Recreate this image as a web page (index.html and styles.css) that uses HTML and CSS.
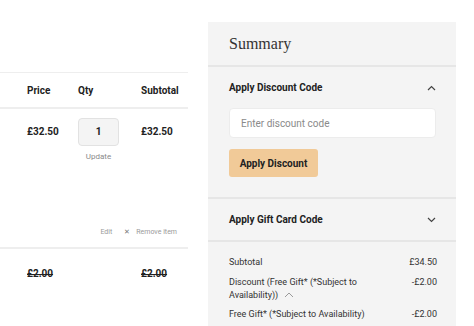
FILE: index.html
```html
<!DOCTYPE html>
<html>
  <head>
    <meta charset="UTF-8">
    <meta name="viewport" content="width=device-width, initial-scale=1.0">
    <title>Basket</title>
    <link rel="stylesheet" href="styles.css">
  </head>
  <body>
    <div class="page">
      <main class="cart">
        <div class="cart-head">
          <span>Price</span>
          <span>Qty</span>
          <span>Subtotal</span>
        </div>
        <div class="cart-item">
          <div class="cart-cols">
            <span class="money">£32.50</span>
            <div class="qty">
              <div class="qty-box">1</div>
              <span class="qty-update">Update</span>
            </div>
            <span class="money">£32.50</span>
          </div>
          <div class="item-actions">
            <a>Edit</a>
            <a><span class="remove-x">✕</span>Remove item</a>
          </div>
        </div>
        <div class="cart-item gift-item">
          <div class="cart-cols">
            <span class="money struck">£2.00</span>
            <span></span>
            <span class="money struck">£2.00</span>
          </div>
        </div>
      </main>

      <aside class="summary">
        <div class="summary-title">Summary</div>

        <div class="section">
          <div class="section-head">
            <span>Apply Discount Code</span>
            <svg class="chev" width="9" height="6" viewBox="0 0 9 6"><polyline points="1,5 4.5,1.5 8,5" fill="none" stroke="#444" stroke-width="1.2"/></svg>
          </div>
          <input class="code-input" type="text" placeholder="Enter discount code">
          <button class="apply-btn">Apply Discount</button>
        </div>

        <div class="section">
          <div class="section-head">
            <span>Apply Gift Card Code</span>
            <svg class="chev" width="9" height="6" viewBox="0 0 9 6"><polyline points="1,1 4.5,4.5 8,1" fill="none" stroke="#444" stroke-width="1.2"/></svg>
          </div>
        </div>

        <div class="totals">
          <div class="total-row">
            <span class="total-label">Subtotal</span>
            <span>£34.50</span>
          </div>
          <div class="total-row">
            <span class="total-label">Discount (Free Gift* (*Subject to Availability))
              <svg class="mini-chev" width="10" height="6" viewBox="0 0 10 6"><polyline points="1,5 5,1 9,5" fill="none" stroke="#9a9a9a" stroke-width="1"/></svg>
            </span>
            <span>-£2.00</span>
          </div>
          <div class="total-row">
            <span class="total-label">Free Gift* (*Subject to Availability)</span>
            <span>-£2.00</span>
          </div>
        </div>
      </aside>
    </div>
  </body>
</html>
```

FILE: styles.css
```css
body {
  margin: 0;
  font-family: Roboto, "Liberation Sans", sans-serif;
  color: #222;
  background-color: #fff;
}

.page {
  display: flex;
  gap: 20px;
  padding: 22px 18px 0 0;
  height: 304px;
  overflow: hidden;
}

.cart {
  width: 188px;
  margin-top: 50px;
  flex-shrink: 0;
}

.cart-head,
.cart-cols {
  display: grid;
  grid-template-columns: 51px 63px 1fr;
}

.cart-head {
  height: 34px;
  align-items: center;
  padding-left: 27px;
  border-top: 1px solid #eeeeee;
  border-bottom: 2px solid #eeeeee;
  font-size: 10px;
  font-weight: 700;
}

.cart-item {
  padding: 9px 11px 10px 27px;
  border-bottom: 2px solid #eeeeee;
}

.money {
  font-size: 10px;
  font-weight: 700;
  line-height: 28px;
}

.struck {
  text-decoration: line-through;
}

.qty {
  display: flex;
  flex-direction: column;
  align-items: center;
  width: 41px;
}

.qty-box {
  width: 39px;
  height: 26px;
  border: 1px solid #e2e2e2;
  border-radius: 4px;
  background-color: #f4f4f4;
  font-size: 10px;
  font-weight: 700;
  line-height: 26px;
  text-align: center;
}

.qty-update {
  margin-top: 6px;
  font-size: 8px;
  line-height: 10px;
  color: #8a8a8a;
}

.item-actions {
  display: flex;
  justify-content: flex-end;
  gap: 12px;
  margin-top: 65px;
  font-size: 7px;
  line-height: 10px;
  color: #9a9a9a;
}

.remove-x {
  font-size: 7px;
  margin-right: 6px;
  color: #777;
}

.gift-item {
  height: 60px;
  padding-top: 11px;
  border-bottom: none;
}

.summary {
  width: 248px;
  flex-shrink: 0;
  background-color: #f4f4f4;
}

.summary-title {
  height: 43px;
  padding: 0 21px;
  line-height: 43px;
  font-family: "Liberation Serif", "DejaVu Serif", serif;
  font-size: 16px;
  color: #333;
  border-bottom: 2px solid #e6e6e6;
}

.section {
  padding: 0 20px 0 21px;
  border-bottom: 2px solid #e6e6e6;
}

.section-head {
  display: flex;
  justify-content: space-between;
  align-items: center;
  height: 41px;
  font-size: 10px;
  font-weight: 700;
}

.code-input {
  display: block;
  box-sizing: border-box;
  width: 207px;
  height: 30px;
  padding: 0 11px;
  border: 1px solid #ececec;
  border-radius: 4px;
  background-color: #fff;
  font-family: Roboto, sans-serif;
  font-size: 10px;
  outline: none;
}

.code-input::placeholder {
  color: #8a8a8a;
}

.apply-btn {
  display: block;
  width: 89px;
  height: 28px;
  margin: 11px 0 20px 0;
  padding: 0;
  border: none;
  border-radius: 3px;
  background-color: #f1ca98;
  font-family: Roboto, sans-serif;
  font-size: 10px;
  font-weight: 700;
  color: #222;
}

.totals {
  display: flex;
  flex-direction: column;
  gap: 6.5px;
  padding: 14px 19px 0 21px;
  font-size: 9px;
  line-height: 13px;
  color: #333;
}

.total-row {
  display: flex;
  justify-content: space-between;
}

.total-label {
  width: 150px;
}

.mini-chev {
  margin-left: 4px;
  vertical-align: middle;
}
```
